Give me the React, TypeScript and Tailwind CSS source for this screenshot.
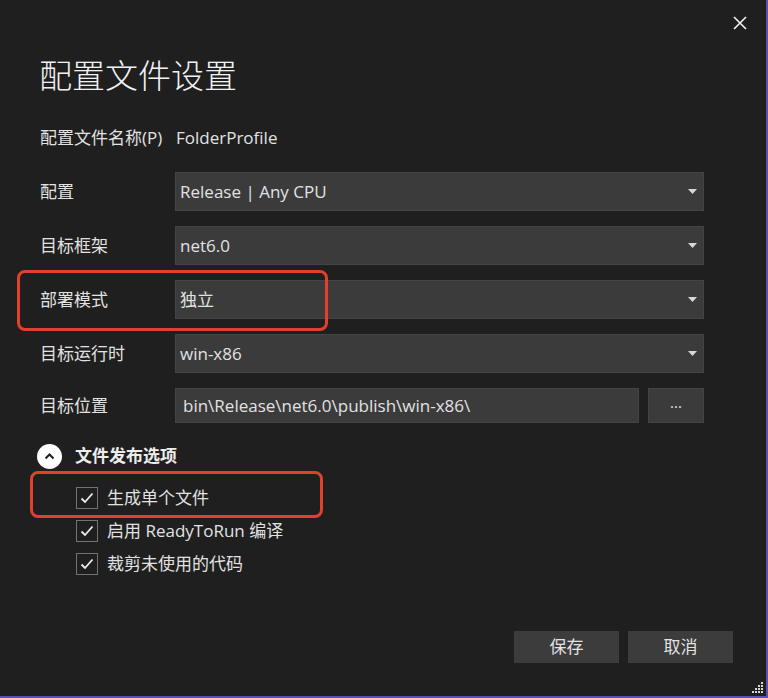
import React from 'react';

const FONT = "font-['Open_Sans','Noto_Sans_CJK_SC',sans-serif]";

const Caret: React.FC = () => (
  <svg width="9" height="5" viewBox="0 0 9 5" className="shrink-0">
    <path d="M0 0 L9 0 L4.5 5 Z" fill="#d8d8d8" />
  </svg>
);

const Select: React.FC<{ value: string }> = ({ value }) => (
  <div className="flex h-[39px] flex-1 items-center justify-between border border-[#444444] bg-[#3b3b3b] pl-[4px] pr-[6px] text-[17px] text-[#e2e2e2]">
    <span>{value}</span>
    <Caret />
  </div>
);

const Check: React.FC<{ label: string }> = ({ label }) => (
  <div className="flex h-[22px] items-center gap-[9px]">
    <div className="flex h-[22px] w-[22px] items-center justify-center border border-[#737373]">
      <svg width="14" height="12" viewBox="0 0 14 12">
        <path d="M1.5 6.5 L5 10 L12.5 1.5" fill="none" stroke="#eeeeee" strokeWidth="1.8" />
      </svg>
    </div>
    <span className="text-[17px] text-[#e2e2e2]">{label}</span>
  </div>
);

export default function App() {
  return (
    <div
      className={`relative flex h-[698px] w-[768px] flex-col border-b-2 border-r-2 border-[#5a52ad] bg-[#1f1f1f] ${FONT}`}
    >
      {/* header */}
      <div className="mt-[16px] flex h-[18px] justify-end pr-[19px]">
        <svg width="14" height="14" viewBox="0 0 14 14">
          <path d="M1 1 L13 13 M13 1 L1 13" stroke="#f2f2f2" strokeWidth="1.6" />
        </svg>
      </div>
      <h1 className="ml-[39px] mt-[20px] text-[33px] font-light leading-[44px] text-[#f2f2f2]">配置文件设置</h1>

      <div className="ml-[40px] mr-[62px] mt-[28px] flex flex-col">
        <div className="flex h-[24px] items-center text-[17px] text-[#e2e2e2]">
          <span className="w-[136px]">配置文件名称(P)</span>
          <span>FolderProfile</span>
        </div>

        <div className="mt-[22px] flex flex-col gap-[15px]">
          <div className="flex items-center">
            <span className="w-[135px] text-[17px] text-[#e2e2e2]">配置</span>
            <Select value="Release | Any CPU" />
          </div>
          <div className="flex items-center">
            <span className="w-[135px] text-[17px] text-[#e2e2e2]">目标框架</span>
            <Select value="net6.0" />
          </div>
          <div className="relative flex items-center">
            <span className="w-[135px] text-[17px] text-[#e2e2e2]">部署模式</span>
            <Select value="独立" />
            <div className="pointer-events-none absolute left-[-23px] top-[-10px] h-[61px] w-[311px] rounded-[8px] border-[3px] border-[#e0402c]" />
          </div>
          <div className="flex items-center">
            <span className="w-[135px] text-[17px] text-[#e2e2e2]">目标运行时</span>
            <Select value="win-x86" />
          </div>
          <div className="flex items-center">
            <span className="w-[135px] text-[17px] text-[#e2e2e2]">目标位置</span>
            <div className="flex h-[35px] flex-1 items-center gap-[9px]">
              <div className="flex h-[35px] flex-1 items-center border border-[#444444] bg-[#3b3b3b] pl-[7px] text-[17px] text-[#e2e2e2]">
                bin\Release\net6.0\publish\win-x86\
              </div>
              <div className="flex h-[35px] w-[56px] items-center justify-center border border-[#444444] bg-[#3b3b3b] pb-[6px] text-[15px] text-[#e2e2e2]">
                ...
              </div>
            </div>
          </div>
        </div>

        <div className="mt-[21px] flex h-[24px] items-center gap-[13px]">
          <div className="ml-[-3px] flex h-[25px] w-[25px] items-center justify-center rounded-full bg-white">
            <svg width="11" height="7" viewBox="0 0 11 7">
              <path d="M1.5 5.5 L5.5 1.5 L9.5 5.5" fill="none" stroke="#1f1f1f" strokeWidth="2" />
            </svg>
          </div>
          <span className="text-[17px] font-bold text-[#ececec]">文件发布选项</span>
        </div>

        <div className="ml-[36px] mt-[19px] flex flex-col gap-[11px]">
          <div className="relative">
            <Check label="生成单个文件" />
            <div className="pointer-events-none absolute left-[-46px] top-[-16px] h-[47px] w-[293px] rounded-[8px] border-[3px] border-[#e0402c]" />
          </div>
          <Check label="启用 ReadyToRun 编译" />
          <Check label="裁剪未使用的代码" />
        </div>
      </div>

      <div className="mb-[33px] mr-[33px] mt-auto flex justify-end gap-[9px]">
        <button className="h-[32px] w-[105px] bg-[#3c3c3c] text-[17px] text-[#e2e2e2]">保存</button>
        <button className="h-[32px] w-[105px] bg-[#3c3c3c] text-[17px] text-[#e2e2e2]">取消</button>
      </div>

      <svg className="absolute bottom-[2px] right-[2px]" width="14" height="14" viewBox="0 0 14 14">
        {[
          [11, 2], [11, 5], [8, 5], [11, 8], [8, 8], [5, 8], [11, 11], [8, 11], [5, 11], [2, 11],
        ].map(([x, y], i) => (
          <rect key={i} x={x} y={y} width="2" height="2" fill="#d6d6d6" />
        ))}
      </svg>
    </div>
  );
}
